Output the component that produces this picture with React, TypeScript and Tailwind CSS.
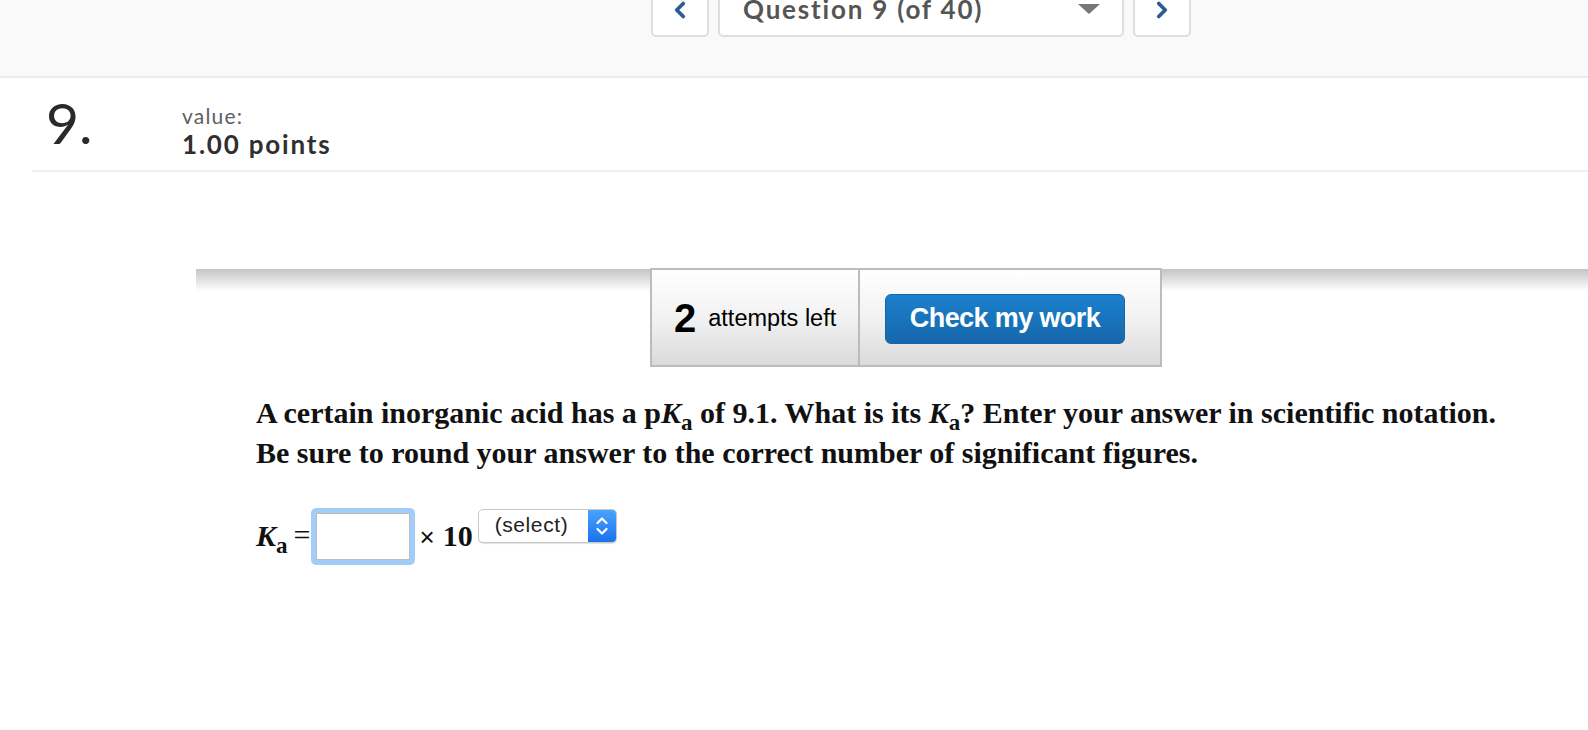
import { ChevronLeft, ChevronRight } from "lucide-react";

function Header() {
  return (
    <header className="h-[78px] bg-[#f9f9f9] border-b-2 border-[#ececec] overflow-hidden">
      <div className="flex gap-[9px] pl-[651px] mt-[-19px] h-[56px]">
        <button className="w-[58px] h-full bg-white border-2 border-[#dedede] rounded-[5px] flex items-center justify-center pt-[2px]">
          <ChevronLeft className="text-[#2d5c93]" size={26} strokeWidth={3.5} />
        </button>
        <div className="w-[406px] h-full bg-white border-2 border-[#dedede] rounded-[5px] flex items-center justify-between pl-[23px] pr-[22px]">
          <span className="font-['Lato',sans-serif] text-[26px] font-bold tracking-[1.8px] text-[#555]">
            Question 9 (of 40)
          </span>
          <svg width="22" height="11" viewBox="0 0 22 11">
            <polygon points="0,0 22,0 11,10" fill="#777" />
          </svg>
        </div>
        <button className="w-[58px] h-full bg-white border-2 border-[#dedede] rounded-[5px] flex items-center justify-center pt-[2px]">
          <ChevronRight className="text-[#2d5c93]" size={26} strokeWidth={3.5} />
        </button>
      </div>
    </header>
  );
}

function Attempts() {
  return (
    <div className="flex items-start pt-[96px]">
      <div className="ml-[196px] flex-1 h-[22px] mt-[1px] bg-gradient-to-b from-[#c4c4c4] to-white" />
      <div className="flex h-[99px] border-2 border-[#bcbcbc] bg-gradient-to-b from-white via-[#f2f2f2] to-[#dadada]">
        <div className="w-[208px] flex items-center pl-[22px] gap-[12px] border-r-2 border-[#bcbcbc] font-['Liberation_Sans',sans-serif] text-black">
          <span className="text-[40px] font-bold leading-none">2</span>
          <span className="text-[23.5px] mt-[2px]">attempts left</span>
        </div>
        <div className="w-[300px] flex items-center pl-[25px]">
          <button className="w-[240px] h-[50px] mt-[2px] rounded-[6px] bg-gradient-to-b from-[#1b80cd] to-[#1667ab] border border-[#1764a6] text-white font-['Liberation_Sans',sans-serif] font-bold text-[27px] tracking-[-0.6px]">
            Check my work
          </button>
        </div>
      </div>
      <div className="w-[426px] h-[22px] mt-[1px] bg-gradient-to-b from-[#c4c4c4] to-white" />
    </div>
  );
}

function Ka() {
  return (
    <span className="whitespace-nowrap">
      <i>K</i>
      <sub className="text-[23px] not-italic relative top-[7px]">a</sub>
    </span>
  );
}

export default function App() {
  return (
    <div className="min-h-screen bg-white">
      <Header />
      <div className="flex items-start pt-[14px] pb-[10px] ml-[32px] border-b-2 border-[#eeeeee]">
        <div className="w-[150px] pl-[14px] font-['Lato',sans-serif] text-[57px] leading-none text-[#2a2a2a] mt-[2px]">
          9.
        </div>
        <div className="font-['Lato',sans-serif] mt-[12px]">
          <p className="text-[21px] leading-[24px] tracking-[1.2px] text-[#5e5e5e]">value:</p>
          <p className="text-[26px] leading-[32px] font-bold text-[#2f2f2f] tracking-[1.8px]">1.00 points</p>
        </div>
      </div>
      <Attempts />
      <div className="pl-[256px] pt-[26px] font-['Liberation_Serif',serif] font-bold text-[30px] leading-[40px] text-[#111]">
        <p>
          A certain inorganic acid has a p<Ka /> of 9.1. What is its <Ka />? Enter your answer in scientific notation.
        </p>
        <p>Be sure to round your answer to the correct number of significant figures.</p>
        <div className="flex items-start mt-[35px]">
          <div className="mt-[8px] mr-[6px]">
            <Ka />
          </div>
          <span className="mt-[7px] font-normal text-[30px] mr-[1px]">=</span>
          <div className="w-[104px] h-[57px] rounded-[5px] bg-[#a3cdf9] p-[5px]">
            <input className="w-full h-full bg-white border border-[#bcbcbc] outline-none" />
          </div>
          <span className="mt-[9px] ml-[4px] font-['Liberation_Sans',sans-serif] font-normal text-[26px]">×</span>
          <span className="mt-[8px] ml-[8px]">10</span>
          <div className="ml-[5px] mt-[1px] w-[139px] h-[34px] flex rounded-[5px] border border-[#c9c9c9] bg-white shadow-[0_1px_1px_rgba(0,0,0,0.12)] overflow-hidden font-['Liberation_Sans',sans-serif] font-normal">
            <span className="flex-1 text-[21px] leading-[30px] pl-[16px] tracking-[0.6px] text-[#222]">(select)</span>
            <span className="w-[28px] bg-gradient-to-b from-[#4aa2fb] to-[#1a72ee] flex items-center justify-center">
              <svg width="14" height="22" viewBox="0 0 14 22" fill="none" stroke="white" strokeWidth="2.2" strokeLinecap="round" strokeLinejoin="round">
                <polyline points="2.5,8 7,3.5 11.5,8" />
                <polyline points="2.5,14 7,18.5 11.5,14" />
              </svg>
            </span>
          </div>
        </div>
      </div>
    </div>
  );
}
